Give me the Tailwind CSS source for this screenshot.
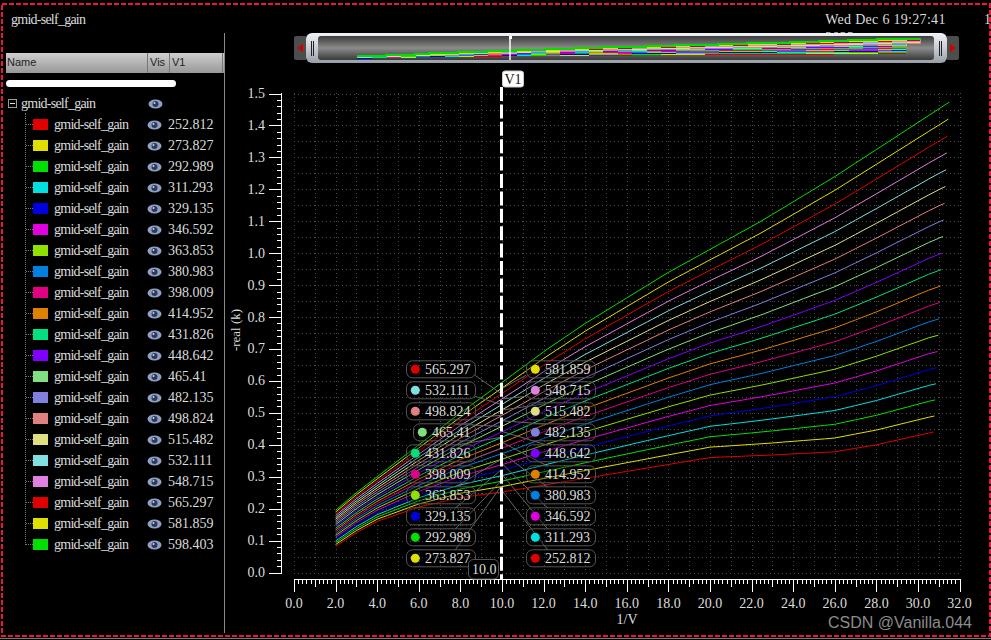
<!DOCTYPE html>
<html lang="en">
  <head>
    <meta charset="UTF-8" />
    <title>gmid-self_gain</title>
    <script src="https://cdn.jsdelivr.net/npm/@tailwindcss/browser@4"></script>
  </head>
  <body class="bg-black">
    <div class="relative w-[991px] h-[640px] overflow-hidden bg-black text-[#dcdcdc] font-['Liberation_Serif',serif]">
      <!-- title bar -->
      <header class="flex h-[33px] overflow-hidden pl-[11px] pt-[11px] text-[14px] leading-[18px]">
        <div class="w-[815px] tracking-[-0.75px] text-[14px]">gmid-self_gain</div>
        <div class="w-[150px] tracking-[0.3px]">Wed Dec 6 19:27:41<br />2023</div>
        <div class="pl-[9px]">1</div>
      </header>

      <div class="flex items-start">
        <!-- signal tree -->
        <aside class="w-[225px] h-[600px] border-r border-[#8a8a8a]">
          <div class="flex h-[20px] mt-[20px] ml-[6px] items-center bg-linear-to-b from-[#cfcfcf] to-[#989898] text-[#222] text-[11px] font-['Liberation_Sans',sans-serif]">
            <div class="w-[142px] pl-[1px] h-full leading-[18px] border-r border-[#777]">Name</div>
            <div class="w-[22px] pl-[2px] h-full leading-[18px] border-r border-[#777]">Vis</div>
            <div class="w-[53px] pl-[2px] h-full leading-[18px] border-r border-[#777]">V1</div>
          </div>
          <div class="w-[170px] h-[7px] mt-[7px] ml-[6px] rounded-full bg-white"></div>
          <div class="relative ml-[8px] mt-[6px]">
            <div class="absolute left-[17px] top-[20px] h-[432px] border-l border-dotted border-[#777]"></div>
            <div class="flex h-[21px] items-center">
              <div class="flex w-[9px] h-[9px] items-center justify-center border border-[#999]">
                <div class="w-[5px] h-px bg-[#ddd]"></div>
              </div>
              <div class="w-[131px] pl-[4px] text-[14px] tracking-[-0.75px]">gmid-self_gain</div>
              <svg class="w-[15px] h-[10px]" viewBox="0 0 15 10"><ellipse cx="7.5" cy="5" rx="7" ry="4.6" fill="#8fa0c4" /><circle cx="7.5" cy="5" r="3" fill="#2f3a58" /><circle cx="6.5" cy="4" r="1" fill="#c8d2e8" /></svg>
            </div>
            <div id="rows"></div>
          </div>
        </aside>

        <main class="w-[766px]">
          <!-- overview strip -->
          <div class="flex h-[30px] ml-[69px] w-[665px] items-center">
            <div class="flex w-[12px] h-[24px] items-center justify-center bg-[#4d4d4d] rounded-l-[2px]">
              <div class="w-0 h-0 border-y-[4px] border-y-transparent border-r-[6px] border-r-[#d00000]"></div>
            </div>
            <div class="flex flex-1 h-[30px] items-center rounded-[6px] bg-linear-to-b from-[#f0f2f6] via-[#c8ccd4] to-[#9a9ea6]">
              <div class="flex w-[12px] justify-center gap-[1px]">
                <div class="w-px h-[15px] bg-[#222]"></div>
                <div class="w-px h-[15px] bg-[#222]"></div>
              </div>
              <div class="relative flex-1 h-[24px] overflow-hidden rounded-[3px] bg-linear-to-b from-[#3c3c3c] via-[#8c8c8c] to-[#3a3a3a]">
                <svg id="overview" class="w-full h-full" viewBox="318 36 616 24"></svg>
              </div>
              <div class="flex w-[13px] justify-center gap-[1px]">
                <div class="w-px h-[15px] bg-[#222]"></div>
                <div class="w-px h-[15px] bg-[#222]"></div>
              </div>
            </div>
            <div class="flex w-[12px] h-[24px] items-center justify-center bg-[#4d4d4d] rounded-r-[2px]">
              <div class="w-0 h-0 border-y-[4px] border-y-transparent border-l-[6px] border-l-[#d00000]"></div>
            </div>
          </div>
          <!-- plot, drawn in page coordinates -->
          <svg id="plot" class="w-[766px] h-[574px]" viewBox="225 63 766 574"></svg>
        </main>
      </div>

      <!-- dashed capture outline -->
      <svg class="absolute left-0 top-0 pointer-events-none" width="991" height="640">
        <rect x="2" y="4" width="988" height="632" fill="none" stroke="#e8173f" stroke-width="2" stroke-dasharray="5 2" />
        <line x1="0" y1="638.5" x2="991" y2="638.5" stroke="#777" />
      </svg>
      <div class="absolute left-[828px] top-[613px] text-[16px] leading-[20px] text-[#8c8c8c] font-['Liberation_Sans',sans-serif]">CSDN @Vanilla.044</div>
    </div>

    <script>
      const COLORS = ["#e00000","#e0e000","#00e000","#00e0e0","#0000e0","#e000e0","#90e000","#0080e0","#e00080","#e08000","#00e080","#8000ff","#80e080","#8080e0","#e08080","#e0e080","#80e0e0","#e080e0","#e00000","#e0e000","#00e000"];
      const VALUES = ["252.812","273.827","292.989","311.293","329.135","346.592","363.853","380.983","398.009","414.952","431.826","448.642","465.41","482.135","498.824","515.482","532.111","548.715","565.297","581.859","598.403"];

      const EYE = '<svg class="w-[15px] h-[10px]" viewBox="0 0 15 10"><ellipse cx="7.5" cy="5" rx="7" ry="4.6" fill="#8fa0c4" /><circle cx="7.5" cy="5" r="3" fill="#2f3a58" /><circle cx="6.5" cy="4" r="1" fill="#c8d2e8" /></svg>';

      document.getElementById("rows").innerHTML = VALUES.map((v, i) => `
        <div class="flex h-[21px] items-center">
          <div class="w-[7px] ml-[18px] mr-[0px] border-t border-dotted border-[#777]"></div>
          <div class="w-[15px] h-[11px]" style="background:${COLORS[i]}"></div>
          <div class="w-[99px] pl-[6px] text-[14px] tracking-[-0.75px]">gmid-self_gain</div>
          ${EYE}
          <div class="pl-[6px] text-[14px]">${v}</div>
        </div>`).join("");

      // knots read off the lowest and highest curve
      const LOW = [[2,.082],[3,.125],[4,.16],[6,.205],[8,.235],[10,.252],[15.2,.308],[20,.36],[23,.368],[26,.378],[28,.4],[30.75,.44]];
      const TOP = [[2,.195],[3,.25],[4,.30],[6,.40],[8,.50],[10,.595],[12.1,.696],[14,.78],[18,.94],[22.4,1.098],[26,1.24],[31.5,1.473]];

      function sample(knots, x) {
        for (let k = 1; k < knots.length; k++) {
          if (x <= knots[k][0]) {
            const [x0, y0] = knots[k - 1], [x1, y1] = knots[k];
            return y0 + (y1 - y0) * (x - x0) / (x1 - x0);
          }
        }
        return knots[knots.length - 1][1];
      }
      const endX = i => 30.75 + 0.75 * i / 20;
      const curve = (i, x) => {
        const t = i / 20;
        return sample(LOW, Math.min(x, 30.75)) * (1 - t) + sample(TOP, x) * t + (x > 30.75 ? 0 : 0);
      };
      const X = v => 294 + v * 20.8;
      const Y = v => 572.5 - v * 319.3;

      let s = "";
      // grid
      let grid = "";
      for (let v = 0; v <= 32; v++) grid += `M${Math.round(X(v)) + .5} 93V572`;
      for (let v = 0; v <= 30; v++) grid += `M294 ${Math.round(Y(v * .05)) + .5}H960`;
      s += `<path d="${grid}" stroke="#4c4c4c" stroke-dasharray="1 3" fill="none" shape-rendering="crispEdges" />`;

      // curves
      for (let i = 0; i < 21; i++) {
        let d = "";
        for (let x = 2; x <= endX(i); x += .5) d += (d ? "L" : "M") + X(x).toFixed(1) + " " + Y(curve(i, x)).toFixed(1);
        d += "L" + X(endX(i)).toFixed(1) + " " + Y(curve(i, endX(i))).toFixed(1);
        s += `<path d="${d}" stroke="${COLORS[i]}" fill="none" stroke-width="1" />`;
      }

      // axes
      let ticks = "M281.5 93V573M294 579.5H960.5";
      for (let k = 0; k <= 75; k++) {
        const y = Math.round(Y(k * .02)) + .5;
        ticks += `M${k % 5 == 0 ? 269 : 276.5} ${y}H281.5`;
      }
      for (let k = 0; k <= 160; k++) {
        const x = Math.round(X(k * .2)) + .5;
        ticks += `M${x} 579.5V${k % 10 == 0 ? 592 : k % 5 == 0 ? 587 : 584}`;
      }
      s += `<path d="${ticks}" stroke="#fff" fill="none" shape-rendering="crispEdges" />`;

      const text = (x, y, t, anchor = "start", fill = "#dcdcdc") =>
        `<text x="${x}" y="${y}" fill="${fill}" font-size="14" text-anchor="${anchor}" font-family="Liberation Serif, serif">${t}</text>`;
      for (let k = 0; k <= 15; k++) s += text(265, Y(k / 10) + 4.5, (k / 10).toFixed(1), "end");
      for (let k = 0; k <= 16; k++) s += text(X(k * 2), 608, (k * 2).toFixed(1), "middle");
      s += text(627, 624, "1/V", "middle");
      s += `<text transform="translate(240 330) rotate(-90)" fill="#dcdcdc" font-size="13" text-anchor="middle" font-family="Liberation Serif, serif">-real (k)</text>`;

      // leader lines and value badges at the cursor
      const LEFT = [18,16,14,12,10,8,6,4,2,1];
      const RIGHT = [19,17,15,13,11,9,7,5,3,0];
      let lines = "", badges = "";
      const badge = (x, w, cy, i, dotX, textX) => {
        badges += `<rect x="${x + .5}" y="${cy - 8.5}" width="${w}" height="17" rx="6" fill="#000" fill-opacity=".25" stroke="#555" />`;
        badges += `<circle cx="${dotX}" cy="${cy}" r="4.5" fill="${COLORS[i]}" />`;
        badges += text(textX, cy + 4.5, VALUES[i]);
      };
      LEFT.forEach((i, row) => {
        const cy = 369.3 + row * 21;
        const short = i == 12;
        const up = cy > Y(curve(i, 10));
        lines += `M${up ? 455 : 475} ${up ? cy - 8 : cy + 6}L501 ${Y(curve(i, 10)).toFixed(1)}`;
        badge(short ? 413 : 406, short ? 62 : 69, cy, i, short ? 422.3 : 415.3, short ? 432 : 425);
      });
      RIGHT.forEach((i, row) => {
        const cy = 369.3 + row * 21;
        const down = cy > Y(curve(i, 10));
        lines += `M${down ? 548 : 526} ${down ? cy - 8 : cy + 6}L503 ${Y(curve(i, 10)).toFixed(1)}`;
        badge(526, 69, cy, i, 535.3, 545);
      });
      s += `<path d="${lines}" stroke="#666" fill="none" />` + badges;

      // cursor
      s += `<line x1="501.5" y1="87" x2="501.5" y2="579" stroke="#fff" stroke-width="3" stroke-dasharray="14 3.4" />`;
      s += `<rect x="502.5" y="71" width="21" height="16" rx="2.5" fill="#fff" stroke="#ccc" />`;
      s += text(513, 83.5, "V1", "middle", "#111");
      s += `<rect x="468.5" y="559.5" width="30" height="19.5" rx="5" fill="#000" stroke="#555" />`;
      s += text(472, 574, "10.0");
      document.getElementById("plot").innerHTML = s;

      // overview: same curves, squeezed and quantised
      let o = "";
      for (let i = 0; i < 21; i++) {
        let d = "";
        for (let x = 2; x <= endX(i); x += .75) {
          const px = Math.round(357 + (x - 2) * 19.25);
          const py = Math.round(38 + (1.47 - curve(i, x)) * 14.3);
          d += (d ? "H" + px + "V" : "M" + px + " ") + py;
        }
        o += `<path d="${d}" stroke="${COLORS[i]}" stroke-width="1.6" fill="none" shape-rendering="crispEdges" />`;
      }
      o += `<path d="M510 36V60" stroke="#fff" stroke-width="1.5" /><rect x="509" y="36" width="3" height="3" fill="#fff" />`;
      document.getElementById("overview").innerHTML = o;
    </script>
  </body>
</html>
